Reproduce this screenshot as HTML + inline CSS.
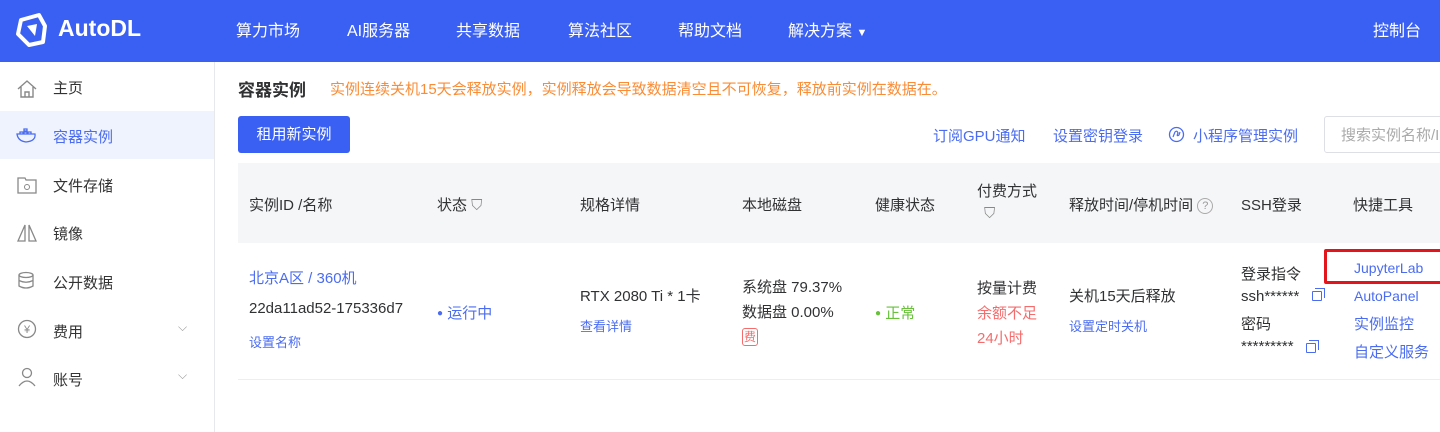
<!DOCTYPE html>
<html><head><meta charset="utf-8">
<style>
*{margin:0;padding:0;box-sizing:border-box}
body{width:1440px;height:432px;overflow:hidden;background:#fff;font-family:"Liberation Sans","Noto Sans CJK SC",sans-serif;color:#303133;position:relative}
.a{position:absolute;white-space:nowrap}
.hdr{position:absolute;left:0;top:0;width:1440px;height:62px;background:#3a5ff3}
.nav{color:#fff;font-size:16px;top:17px}
.side{position:absolute;left:0;top:62px;width:215px;height:370px;border-right:1px solid #e6e8ec}
.si{font-size:15px;color:#333;left:53px}
.blue{color:#3a5ff3}
.f15{font-size:15px}.f14{font-size:14px}.f13{font-size:13px}
</style></head><body>
<div class="hdr"></div>
<svg class="a" style="left:15px;top:12px" width="34" height="36" viewBox="0 0 34 36"><path d="M6 8 L24 3 L30 14 L28 30 L14 33 L3 22 Z" fill="none" stroke="#fff" stroke-width="4" stroke-linejoin="round"/><path d="M12 14 L22 12 L20 24 Z" fill="#fff"/></svg>
<div class="a" style="left:58px;top:15px;color:#fff;font-size:23px;font-weight:bold">AutoDL</div>
<div class="a nav" style="left:236px">算力市场</div>
<div class="a nav" style="left:347px">AI服务器</div>
<div class="a nav" style="left:456px">共享数据</div>
<div class="a nav" style="left:568px">算法社区</div>
<div class="a nav" style="left:678px">帮助文档</div>
<div class="a nav" style="left:788px">解决方案 <span style="font-size:11px">▼</span></div>
<div class="a nav" style="left:1373px">控制台</div>

<div class="side"></div>
<div class="a" style="left:0;top:111px;width:214px;height:48px;background:#eef3fd"></div>
<svg class="a" style="left:16px;top:79px" width="22" height="20" viewBox="0 0 22 20"><path d="M2 10 L11 2 L20 10 M5 8 V18 H17 V8 M9 18 V13 H13 V18" fill="none" stroke="#888" stroke-width="1.4"/></svg>
<div class="a si" style="top:77px">主页</div>
<svg class="a" style="left:16px;top:127px" width="22" height="16" viewBox="0 0 22 16"><path d="M1 7 H19 Q20 14 10 15 Q2 14 1 7 Z M4 5 h3v2h-3z M8 5h3v2h-3z M8 2h3v2h-3z M12 5h3v2h-3z" fill="none" stroke="#4b6cf0" stroke-width="1.3"/></svg>
<div class="a si blue" style="top:126px;color:#4b6cf0">容器实例</div>
<svg class="a" style="left:17px;top:176px" width="20" height="18" viewBox="0 0 20 18"><path d="M1 2 H8 L9 4 H19 V17 H1 Z" fill="none" stroke="#888" stroke-width="1.3"/><circle cx="10" cy="11" r="2.5" fill="none" stroke="#888"/></svg>
<div class="a si" style="top:175px">文件存储</div>
<svg class="a" style="left:16px;top:224px" width="22" height="18" viewBox="0 0 22 18"><path d="M9 1 L2 17 H9 Z M13 1 L20 17 H13 Z" fill="none" stroke="#888" stroke-width="1.3"/></svg>
<div class="a si" style="top:223px">镜像</div>
<svg class="a" style="left:17px;top:271px" width="20" height="20" viewBox="0 0 20 20"><ellipse cx="9" cy="4" rx="7" ry="2.5" fill="none" stroke="#888" stroke-width="1.3"/><path d="M2 4 V15 Q9 19 16 15 V4 M2 9.5 Q9 13 16 9.5" fill="none" stroke="#888" stroke-width="1.3"/></svg>
<div class="a si" style="top:272px">公开数据</div>
<svg class="a" style="left:17px;top:319px" width="20" height="20" viewBox="0 0 20 20"><circle cx="10" cy="10" r="8.5" fill="none" stroke="#888" stroke-width="1.3"/><text x="10" y="14" font-size="11" text-anchor="middle" fill="#888" font-family="Liberation Sans">¥</text></svg>
<div class="a si" style="top:321px">费用</div>
<div class="a" style="left:178px;top:320px;color:#999;font-size:12px">⌵</div>
<svg class="a" style="left:17px;top:367px" width="20" height="20" viewBox="0 0 20 20"><circle cx="10" cy="6" r="4.5" fill="none" stroke="#888" stroke-width="1.3"/><path d="M2 19 Q10 9 18 19" fill="none" stroke="#888" stroke-width="1.3"/></svg>
<div class="a si" style="top:369px">账号</div>
<div class="a" style="left:178px;top:368px;color:#999;font-size:12px">⌵</div>

<div class="a" style="left:238px;top:76px;font-size:17px;font-weight:bold;color:#303133">容器实例</div>
<div class="a" style="left:330px;top:78px;font-size:15px;color:#fa8c35">实例连续关机15天会释放实例，实例释放会导致数据清空且不可恢复，释放前实例在数据在。</div>
<div class="a" style="left:238px;top:116px;width:112px;height:37px;background:#3a5ff3;border-radius:3px;color:#fff;font-size:15px;text-align:center;line-height:37px">租用新实例</div>
<div class="a f15" style="left:933px;top:125px;color:#4b6cf0">订阅GPU通知</div>
<div class="a f15" style="left:1053px;top:125px;color:#4b6cf0">设置密钥登录</div>
<svg class="a" style="left:1168px;top:126px" width="17" height="17" viewBox="0 0 17 17"><circle cx="8.5" cy="8.5" r="7" fill="none" stroke="#4b6cf0" stroke-width="1.3"/><path d="M5 11 L7 6 Q9 4 10 7 Q8 11 11 9 L12 6" fill="none" stroke="#4b6cf0" stroke-width="1.2"/></svg>
<div class="a f15" style="left:1193px;top:125px;color:#4b6cf0">小程序管理实例</div>
<div class="a" style="left:1324px;top:116px;width:130px;height:37px;border:1px solid #dcdfe6;border-radius:3px"></div>
<div class="a f15" style="left:1341px;top:124px;color:#aaa">搜索实例名称/ID</div>

<div class="a" style="left:238px;top:163px;width:1202px;height:80px;background:#f5f6f8"></div>
<div class="a f15" style="left:249px;top:194px">实例ID /名称</div>
<div class="a f15" style="left:437px;top:194px">状态 <span style="color:#888">⛉</span></div>
<div class="a f15" style="left:580px;top:194px">规格详情</div>
<div class="a f15" style="left:742px;top:194px">本地磁盘</div>
<div class="a f15" style="left:875px;top:194px">健康状态</div>
<div class="a f15" style="left:977px;top:180px">付费方式</div>
<div class="a f15" style="left:984px;top:205px;color:#888">⛉</div>
<div class="a f15" style="left:1069px;top:194px">释放时间/停机时间 <span style="display:inline-block;width:16px;height:16px;border:1px solid #aaa;border-radius:50%;font-size:11px;text-align:center;line-height:14px;color:#999;vertical-align:1px">?</span></div>
<div class="a f15" style="left:1241px;top:194px">SSH登录</div>
<div class="a f15" style="left:1353px;top:194px">快捷工具</div>
<div class="a" style="left:238px;top:379px;width:1202px;height:1px;background:#ebeef5"></div>

<div class="a f15" style="left:249px;top:267px;color:#4b6cf0">北京A区 / 360机</div>
<div class="a f15" style="left:249px;top:300px">22da11ad52-175336d7</div>
<div class="a f13" style="left:249px;top:332px;color:#4b6cf0">设置名称</div>
<div class="a f15" style="left:437px;top:302px;color:#4b6cf0"><span style="font-size:10px;vertical-align:2px">●</span> 运行中</div>
<div class="a f15" style="left:580px;top:285px">RTX 2080 Ti * 1卡</div>
<div class="a f13" style="left:580px;top:316px;color:#4b6cf0">查看详情</div>
<div class="a f15" style="left:742px;top:276px">系统盘 79.37%</div>
<div class="a f15" style="left:742px;top:301px">数据盘 0.00%</div>
<div class="a" style="left:742px;top:328px;width:16px;height:18px;border:1px solid #f56c6c;border-radius:3px;color:#f56c6c;font-size:12px;text-align:center;line-height:16px">费</div>
<div class="a f15" style="left:875px;top:302px;color:#67c23a"><span style="font-size:10px;vertical-align:2px">●</span> 正常</div>
<div class="a f15" style="left:977px;top:277px">按量计费</div>
<div class="a f15" style="left:977px;top:302px;color:#f56c6c">余额不足</div>
<div class="a f15" style="left:977px;top:327px;color:#f56c6c">24小时</div>
<div class="a f15" style="left:1069px;top:285px">关机15天后释放</div>
<div class="a f13" style="left:1069px;top:316px;color:#4b6cf0">设置定时关机</div>
<div class="a f15" style="left:1241px;top:263px">登录指令</div>
<div class="a f15" style="left:1241px;top:288px">ssh******</div>
<div class="a" style="left:1312px;top:291px;width:10px;height:10px;border:1.5px solid #4b6cf0;border-radius:1px;background:#fff"></div>
<div class="a" style="left:1315px;top:288px;width:10px;height:10px;border-top:1.5px solid #4b6cf0;border-right:1.5px solid #4b6cf0"></div>
<div class="a f15" style="left:1241px;top:313px">密码</div>
<div class="a f15" style="left:1241px;top:338px">*********</div>
<div class="a" style="left:1306px;top:343px;width:10px;height:10px;border:1.5px solid #4b6cf0;border-radius:1px;background:#fff"></div>
<div class="a" style="left:1309px;top:340px;width:10px;height:10px;border-top:1.5px solid #4b6cf0;border-right:1.5px solid #4b6cf0"></div>
<div class="a" style="left:1324px;top:249px;width:130px;height:35px;border:3.5px solid #e3141c;border-radius:2px"></div>
<div class="a f14" style="left:1354px;top:260px;color:#4b6cf0">JupyterLab</div>
<div class="a f14" style="left:1354px;top:288px;color:#4b6cf0">AutoPanel</div>
<div class="a f15" style="left:1354px;top:313px;color:#4b6cf0">实例监控</div>
<div class="a f15" style="left:1354px;top:341px;color:#4b6cf0">自定义服务</div>
</body></html>
